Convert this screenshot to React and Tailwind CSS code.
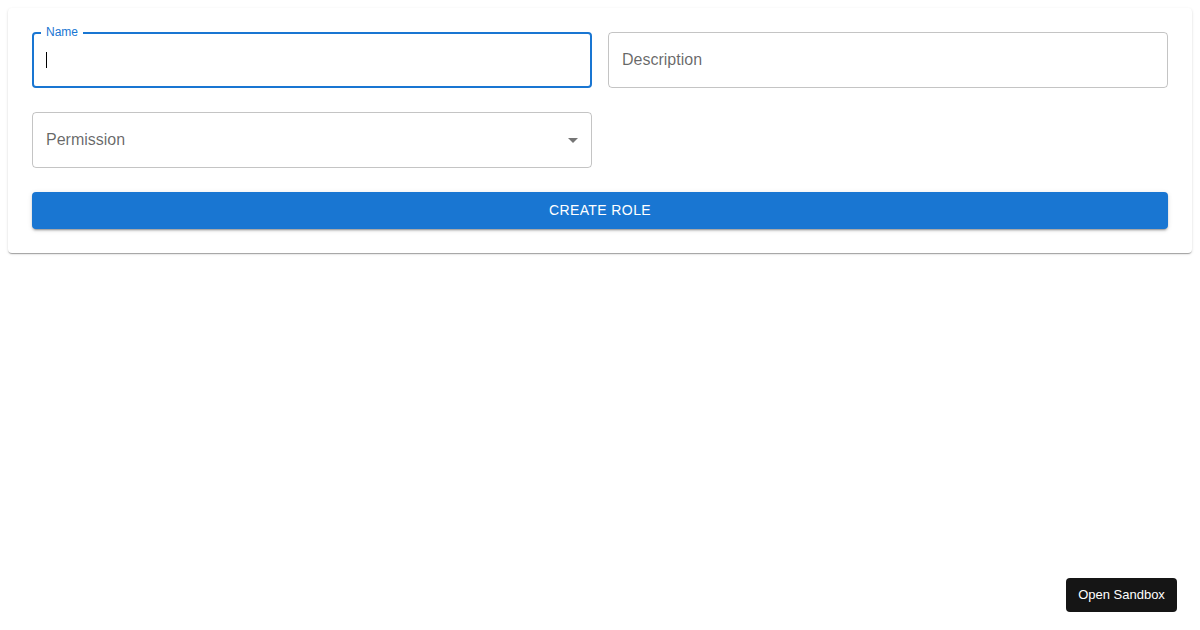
import React from 'react';

const font = { fontFamily: '"Liberation Sans", Arial, Helvetica, sans-serif' };

function OutlinedField({ label, focused, children }) {
  return (
    <div className="relative h-14 w-full">
      <fieldset
        className={`absolute inset-x-0 bottom-0 top-[-5px] m-0 rounded px-2 ${
          focused ? 'border-2 border-[#1976d2]' : 'border border-[rgba(0,0,0,0.23)]'
        }`}
      >
        {focused ? (
          <legend className="-ml-px p-0 text-[12px] leading-[11px] text-[#1976d2]">
            <span className="px-[5px]">{label}</span>
          </legend>
        ) : (
          <legend className="invisible h-[11px] max-w-[0.01px] overflow-hidden p-0 text-[12px] leading-[11px]">
            <span>{label}</span>
          </legend>
        )}
      </fieldset>
      <div className="relative flex h-full items-center px-[14px]">{children}</div>
    </div>
  );
}

export default function App() {
  return (
    <div className="min-h-[630px] bg-white p-2" style={font}>
      <div className="rounded bg-white p-6 shadow-[0_2px_1px_-1px_rgba(0,0,0,0.2),0_1px_1px_0_rgba(0,0,0,0.14),0_1px_3px_0_rgba(0,0,0,0.12)]">
        <div className="grid grid-cols-2 gap-x-4 gap-y-6">
          <OutlinedField label="Name" focused>
            <div className="h-4 w-px bg-black" />
          </OutlinedField>
          <OutlinedField label="Description">
            <span className="text-base text-[rgba(0,0,0,0.6)]">Description</span>
          </OutlinedField>
          <OutlinedField label="Permission">
            <span className="flex-1 text-base text-[rgba(0,0,0,0.6)]">Permission</span>
            <svg width="24" height="24" viewBox="0 0 24 24" className="-mr-[7px] fill-[rgba(0,0,0,0.54)]">
              <path d="M7 10l5 5 5-5z" />
            </svg>
          </OutlinedField>
        </div>
        <button className="mt-6 flex h-[37px] w-full items-center justify-center rounded bg-[#1976d2] pb-px text-sm font-normal uppercase tracking-[0.4px] text-white shadow-[0_3px_1px_-2px_rgba(0,0,0,0.2),0_2px_2px_0_rgba(0,0,0,0.14),0_1px_5px_0_rgba(0,0,0,0.12)]">
          Create Role
        </button>
      </div>

      <button className="fixed bottom-[18px] right-[23px] h-[34px] w-[111px] rounded-[4px] bg-[#151515] text-[13px] text-white">
        Open Sandbox
      </button>
    </div>
  );
}
